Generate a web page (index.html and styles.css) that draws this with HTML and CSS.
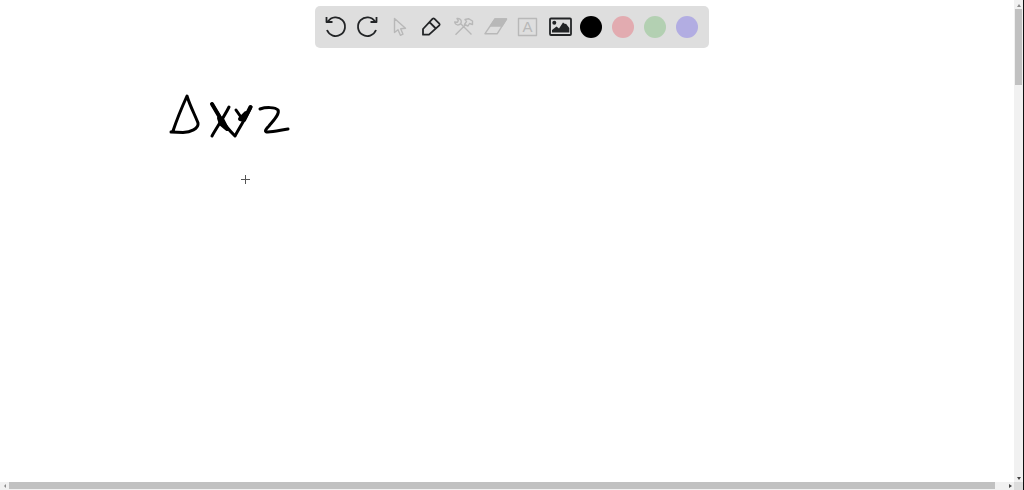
FILE: index.html
```html
<!DOCTYPE html>
<html lang="en">
<head>
    <meta charset="UTF-8">
    <meta name="viewport" content="width=device-width, initial-scale=1.0">
    <title>Whiteboard</title>
    <link rel="stylesheet" href="styles.css">
</head>
<body>
<div class="app">
    <!-- Canvas -->
    <main class="board">
        <svg class="ink" role="img" aria-label="Handwritten triangle XYZ">
            <g class="stroke">
                <path d="M173 131 C177 119 182 107 187 96 C190 106 195 115 198 123 C199 129 190 132 183 132.500 L171 132"/>
                <path d="M212 104 L220 117 C224 125 230 131 235 136 C239 128 246 118 251 107"/>
                <path d="M229 107 C224 117 217 127 212 136"/>
                <path d="M236 110 L243 120"/>
                <path d="M260 109 C266 107 275 107 278 110 C280 114 273 121 269 126 C265 130 264 132 268 132 C274 132 281 130 288 129"/>
            </g>
            <path class="stroke heavy" d="M212 104 L222 121 M219 118 L221 124 L227 129 L222 119"/>
            <path class="stroke heavy" d="M250.500 107 L244 120 L240 119 L246 113"/>
            <path class="crosshair" d="M241 179.500 H250 M245.500 175 V184"/>
        </svg>
    </main>

    <!-- Scrollbars -->
    <div class="scroll scroll-v">
        <button class="arrow" aria-label="Scroll up"><svg viewBox="0 0 8 8"><path d="M2 6 L4 3 L6 6 Z"/></svg></button>
        <div class="track"><div class="thumb"></div></div>
        <button class="arrow dark" aria-label="Scroll down"><svg viewBox="0 0 8 8"><path d="M2 3 L4 6 L6 3 Z"/></svg></button>
    </div>
    <div class="scroll scroll-h">
        <button class="arrow" aria-label="Scroll left"><svg viewBox="0 0 8 8"><path d="M5 2 L3 4 L5 6 Z"/></svg></button>
        <div class="track"><div class="thumb"></div></div>
        <button class="arrow dark" aria-label="Scroll right"><svg viewBox="0 0 8 8"><path d="M3 2 L6 4 L3 6 Z"/></svg></button>
    </div>
    <div class="corner"></div>

    <!-- Toolbar -->
    <div class="toolbar-wrap">
        <div class="toolbar" role="toolbar" aria-label="Drawing tools">
            <button class="tool" aria-label="Undo">
                <svg viewBox="0 0 24 24"><path d="M4 15 A9.300 9.300 0 1 0 5 6.500 M3.500 2 V7 H9.500"/></svg>
            </button>
            <button class="tool" aria-label="Redo">
                <svg viewBox="0 0 24 24"><path d="M21 15 A9.300 9.300 0 1 1 20 6.500 M21.500 2 V7 H15.500"/></svg>
            </button>
            <button class="tool off" aria-label="Select">
                <svg viewBox="0 0 24 24"><path d="M7.500 3.500 V17.500 L11 14.800 L13.400 20.300 L16 19.200 L13.700 13.800 L18.500 13.300 Z"/></svg>
            </button>
            <button class="tool" aria-label="Pen">
                <svg viewBox="0 0 24 24"><path d="M4 19.700 V14 L13.700 3.600 Q14.500 3 15.300 3.700 L20.300 8.700 Q21 9.500 20.300 10.300 L10 19.700 Z M10.500 7.200 L16.800 13.500"/></svg>
            </button>
            <button class="tool off" aria-label="Tools">
                <svg viewBox="0 0 24 24"><path d="M6 3.500 A3.300 3.300 0 1 1 3.700 7 L6.500 7.200 L7.300 5.500 Z M9.500 8.500 L20.500 19.500 M4.500 19.700 L14.500 9.700 M14 4.500 L17.500 3.700 L21.500 6 V9.500 L18.500 8.500 L17 11 L13.500 9.500 L15.500 6.500 Z"/></svg>
            </button>
            <button class="tool off" aria-label="Eraser">
                <svg viewBox="0 0 24 24"><path d="M2 18.700 L12 4 H23.500 L14.300 18.700 Z"/><path class="solid" d="M7.500 11 L12 4 H23.500 L19 11 Z"/></svg>
            </button>
            <button class="tool off" aria-label="Text">
                <svg viewBox="0 0 24 24"><rect x="3.500" y="3.500" width="18" height="17"/><text x="12.500" y="17" text-anchor="middle">A</text></svg>
            </button>
            <button class="tool" aria-label="Image">
                <svg viewBox="0 0 24 24"><rect x="3" y="3.500" width="21" height="16.500" rx="1"/><circle class="solid dot" cx="7.300" cy="7.700" r="2"/><path class="solid dot" d="M5 17.500 V15 L9.500 11.500 L12 13.500 L16 7.500 L18 9 L19 8.800 L22.300 13 V17.500 Z"/></svg>
            </button>
            <button class="tool" aria-label="Black"><span class="swatch black"></span></button>
            <button class="tool" aria-label="Red"><span class="swatch red"></span></button>
            <button class="tool" aria-label="Green"><span class="swatch green"></span></button>
            <button class="tool" aria-label="Purple"><span class="swatch purple"></span></button>
        </div>
    </div>
</div>
</body>
</html>
```
FILE: styles.css
```css
* {
    margin: 0;
    padding: 0;
    box-sizing: border-box;
}

body {
    font-family: "Liberation Sans", Arial, sans-serif;
    background-color: #ffffff;
}

button {
    border: none;
    background: none;
    cursor: pointer;
}

.app {
    position: relative;
    display: grid;
    grid-template-columns: 1fr 9px;
    grid-template-rows: 1fr 8px;
    height: 100vh;
    border-right: 1px solid #111111;
    overflow: hidden;
}

/* Canvas */
.board {
    grid-column: 1;
    grid-row: 1;
    cursor: crosshair;
}

.ink {
    display: block;
    width: 100%;
    height: 100%;
}

.stroke {
    fill: none;
    stroke: #000000;
    stroke-width: 3px;
    stroke-linecap: round;
    stroke-linejoin: round;
}

.heavy {
    stroke-width: 4px;
}

.crosshair {
    fill: none;
    stroke: #555555;
    stroke-width: 1px;
}

/* Toolbar */
.toolbar-wrap {
    position: absolute;
    top: 6px;
    left: 0;
    right: 0;
    display: flex;
    justify-content: center;
    pointer-events: none;
}

.toolbar {
    display: flex;
    padding: 5px 6px 5px 4px;
    background-color: #dedede;
    border-radius: 5px;
    pointer-events: auto;
}

.tool {
    display: flex;
    align-items: center;
    justify-content: center;
    width: 32px;
    height: 32px;
    color: #222426;
}

.tool.off {
    color: #b8b8b8;
}

.tool svg {
    width: 24px;
    height: 24px;
    overflow: visible;
    fill: none;
    stroke: currentColor;
    stroke-width: 1.8px;
    stroke-linejoin: round;
}

.tool.off svg {
    stroke-width: 1.4px;
}

.tool .solid {
    fill: currentColor;
}

.tool .dot {
    stroke: none;
}

.tool text {
    font-size: 15px;
    fill: currentColor;
    stroke: none;
}

.swatch {
    width: 22px;
    height: 22px;
    border-radius: 50%;
}

.black { background-color: #000000; }
.red { background-color: #e2abb0; }
.green { background-color: #b3d0b2; }
.purple { background-color: #b2ade2; }

/* Scrollbars */
.scroll {
    display: flex;
    background-color: #f1f1f1;
}

.scroll-v {
    grid-column: 2;
    grid-row: 1;
    flex-direction: column;
}

.scroll-h {
    grid-column: 1;
    grid-row: 2;
}

.track {
    flex: 1;
}

.thumb {
    background-color: #c1c1c1;
}

.scroll-v .thumb {
    height: 76px;
    margin: 0 1px;
}

.scroll-h .thumb {
    width: 99%;
    height: 7px;
}

.arrow {
    display: flex;
    align-items: center;
    justify-content: center;
    width: 9px;
    height: 9px;
}

.scroll-h .arrow {
    height: 8px;
}

.arrow svg {
    width: 8px;
    height: 8px;
    fill: #8a8a8a;
}

.arrow.dark svg {
    fill: #444444;
}

.corner {
    background-color: #dcdcdc;
}
```
